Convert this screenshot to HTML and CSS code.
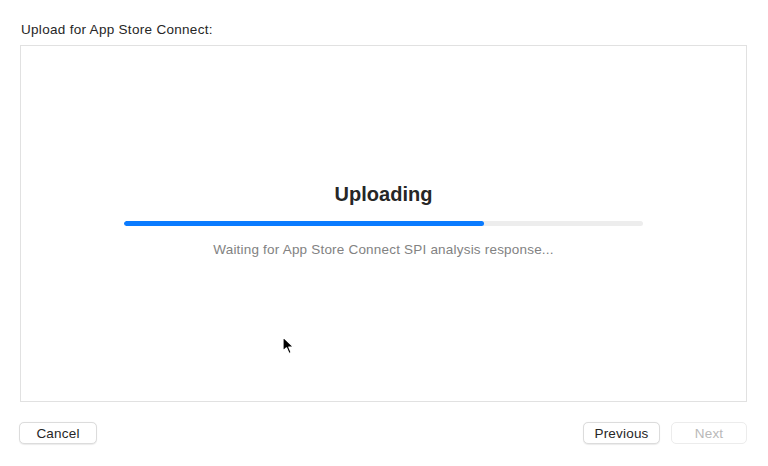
FILE: index.html
```html
<!DOCTYPE html>
<html>
<head>
<meta charset="utf-8">
<link rel="stylesheet" href="styles.css">
</head>
<body>
<div class="window">
  <div class="label">Upload for App Store Connect:</div>
  <div class="panel">
    <div class="heading">Uploading</div>
    <div class="track"><div class="fill" style="width:360px"></div></div>
    <div class="status">Waiting for App Store Connect SPI analysis response...</div>
  </div>
  <div class="footer">
    <button class="btn btn-cancel">Cancel</button>
    <div class="right">
      <button class="btn btn-prev">Previous</button>
      <button class="btn btn-next" disabled>Next</button>
    </div>
  </div>
  <svg class="cursor" width="14" height="20" viewBox="0 0 14 20">
    <path d="M1 1 L1 15 L4.5 11.8 L7 17.5 L9.2 16.5 L6.8 11 L11.5 11 Z" fill="#000" stroke="#fff" stroke-width="1.2" stroke-linejoin="round"/>
  </svg>
</div>
</body>
</html>
```
FILE: styles.css
```css
html, body {
  margin: 0;
  padding: 0;
  background: #ffffff;
}
body {
  font-family: "Liberation Sans", Arial, sans-serif;
  color: #262626;
}
.window {
  position: relative;
  width: 768px;
  height: 466px;
  padding: 22px 21px 0 20px;
  box-sizing: border-box;
}
.label {
  font-size: 13.5px;
  letter-spacing: 0.3px;
  line-height: 16px;
  margin-left: 1px;
  margin-bottom: 7px;
  color: #262626;
}
.panel {
  height: 357px;
  border: 1px solid #e1e1e1;
  box-sizing: border-box;
  display: flex;
  flex-direction: column;
  align-items: center;
  padding-top: 136px;
}
.heading {
  font-size: 20px;
  line-height: 24px;
  font-weight: bold;
  color: #262626;
}
.track {
  margin-top: 15px;
  width: 519px;
  height: 5px;
  border-radius: 3px;
  background: #ededed;
  overflow: hidden;
}
.fill {
  height: 100%;
  border-radius: 3px;
  background: #0a7bff;
}
.status {
  margin-top: 16px;
  font-size: 13.5px;
  letter-spacing: 0.2px;
  line-height: 16px;
  color: #828282;
}
.footer {
  margin-top: 20px;
  margin-left: -1px;
  display: flex;
  justify-content: space-between;
}
.right {
  display: flex;
  gap: 11px;
}
.btn {
  height: 22px;
  border-radius: 5px;
  border: 1px solid #dcdcdc;
  background: #ffffff;
  box-shadow: 0 0.5px 1px rgba(0,0,0,0.08);
  font-family: "Liberation Sans", Arial, sans-serif;
  font-size: 13.5px;
  letter-spacing: 0.2px;
  color: #262626;
  padding: 0;
  box-sizing: border-box;
}
.btn-cancel { width: 78px; }
.btn-prev { width: 77px; }
.btn-next {
  width: 76px;
  color: #b9b9b9;
  border-color: #ececec;
  box-shadow: none;
}
.cursor {
  position: absolute;
  left: 282px;
  top: 336px;
}
```
